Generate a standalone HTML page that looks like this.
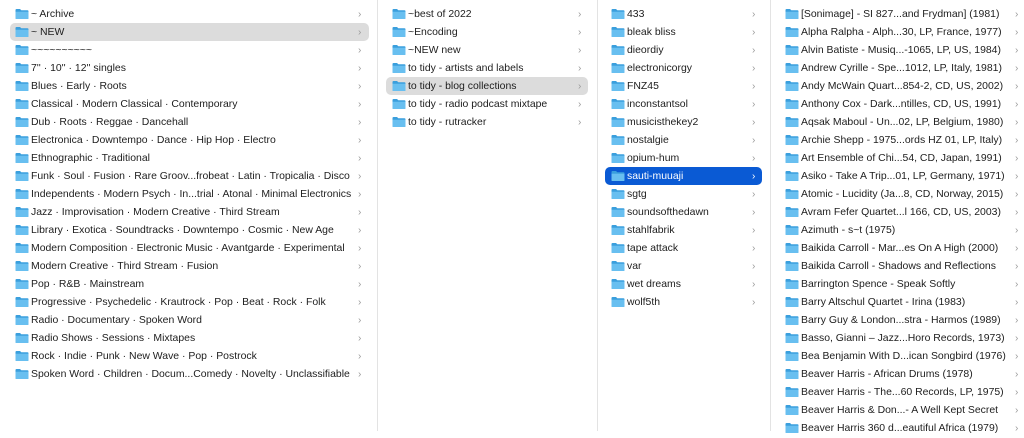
<!DOCTYPE html><html><head><style>
body{margin:0;width:1024px;height:431px;background:#fff;overflow:hidden;font-family:"Liberation Sans",sans-serif;font-size:10.45px;color:#1d1d1d;position:relative}
.col{position:absolute;top:0;height:431px;border-right:1px solid #e3e3e3}
.r{position:absolute;height:18px;line-height:19px;white-space:nowrap}
.r.s{background:#dcdcdc;border-radius:5px}
.r.b{background:#0a5ad4;color:#fff;border-radius:5px}
.f{position:absolute;top:4px;width:14px;height:11px}
</style></head><body>
<svg width="0" height="0" style="position:absolute"><defs><symbol id="fd" viewBox="0 0 14 11"><path d="M0.5 1.5Q0.5 0.5 1.5 0.5H5L6.3 1.8H12.5Q13.5 1.8 13.5 2.8V9.8Q13.5 10.5 12.8 10.5H1.2Q0.5 10.5 0.5 9.8Z" fill="#3a9fdd"/><path d="M0.5 3.2H13.5V9.8Q13.5 10.5 12.8 10.5H1.2Q0.5 10.5 0.5 9.8Z" fill="#68bff0"/></symbol></defs></svg>
<div id="root"></div>
<script>
const cols=[
{x:0,w:377,ix:15,tx:31,cx:358,sx:10,sw:359,items:["~ Archive","~ NEW","~~~~~~~~~~","7'' · 10'' · 12'' singles","Blues · Early · Roots","Classical · Modern Classical · Contemporary","Dub · Roots · Reggae · Dancehall","Electronica · Downtempo · Dance · Hip Hop · Electro","Ethnographic · Traditional","Funk · Soul · Fusion · Rare Groov...frobeat · Latin · Tropicalia · Disco","Independents · Modern Psych · In...trial · Atonal · Minimal Electronics","Jazz · Improvisation · Modern Creative · Third Stream","Library · Exotica · Soundtracks · Downtempo · Cosmic · New Age","Modern Composition · Electronic Music · Avantgarde · Experimental","Modern Creative · Third Stream · Fusion","Pop · R&B · Mainstream","Progressive · Psychedelic · Krautrock · Pop · Beat · Rock · Folk","Radio · Documentary · Spoken Word","Radio Shows · Sessions · Mixtapes","Rock · Indie · Punk · New Wave · Pop · Postrock","Spoken Word · Children · Docum...Comedy · Novelty · Unclassifiable"],sel:1,st:"s"},
{x:378,w:219,ix:392,tx:408,cx:578,sx:386,sw:202,items:["~best of 2022","~Encoding","~NEW new","to tidy - artists and labels","to tidy - blog collections","to tidy - radio podcast mixtape","to tidy - rutracker"],sel:4,st:"s"},
{x:598,w:172,ix:611,tx:627,cx:752,sx:605,sw:157,items:["433","bleak bliss","dieordiy","electronicorgy","FNZ45","inconstantsol","musicisthekey2","nostalgie","opium-hum","sauti-muuaji","sgtg","soundsofthedawn","stahlfabrik","tape attack","var","wet dreams","wolf5th"],sel:9,st:"b"},
{x:771,w:253,ix:785,tx:801,cx:1015,sx:0,sw:0,items:["[Sonimage] - SI 827...and Frydman] (1981)","Alpha Ralpha - Alph...30, LP, France, 1977)","Alvin Batiste - Musiq...-1065, LP, US, 1984)","Andrew Cyrille - Spe...1012, LP, Italy, 1981)","Andy McWain Quart...854-2, CD, US, 2002)","Anthony Cox - Dark...ntilles, CD, US, 1991)","Aqsak Maboul - Un...02, LP, Belgium, 1980)","Archie Shepp - 1975...ords HZ 01, LP, Italy)","Art Ensemble of Chi...54, CD, Japan, 1991)","Asiko - Take A Trip...01, LP, Germany, 1971)","Atomic - Lucidity (Ja...8, CD, Norway, 2015)","Avram Fefer Quartet...l 166, CD, US, 2003)","Azimuth -  s~t (1975)","Baikida Carroll - Mar...es On A High (2000)","Baikida Carroll - Shadows and Reflections","Barrington Spence - Speak Softly","Barry Altschul Quartet - Irina (1983)","Barry Guy & London...stra - Harmos (1989)","Basso, Gianni – Jazz...Horo Records, 1973)","Bea Benjamin With D...ican Songbird (1976)","Beaver Harris - African Drums (1978)","Beaver Harris - The...60 Records, LP, 1975)","Beaver Harris & Don...- A Well Kept Secret","Beaver Harris 360 d...eautiful Africa (1979)"],sel:-1}
];
let h="";
const esc=s=>s.replace(/&/g,"&amp;").replace(/</g,"&lt;");
cols.forEach((c,ci)=>{
 h+=`<div class="col" style="left:${c.x}px;width:${c.w}px"></div>`;
 c.items.forEach((it,i)=>{
  const y=5+i*18;
  const cls=i===c.sel?("r "+c.st):"r";
  if(i===c.sel)h+=`<div class="${cls}" style="top:${y}px;left:${c.sx}px;width:${c.sw}px"></div>`;
  h+=`<svg class="f" style="position:absolute;top:${y+3}px;left:${c.ix}px;width:14px;height:12px" viewBox="0 0 14 11"><use href="#fd"/></svg>`;
  h+=`<div class="r" style="top:${y}px;left:${c.tx}px;${i===c.sel&&c.st==='b'?'color:#fff':''}">${esc(it)}</div>`;
  h+=`<div class="r" style="top:${y}px;left:${c.cx}px;font-size:10px;color:${i===c.sel&&c.st==='b'?'#fff':'#9a9a9a'}">›</div>`;
 });
});
document.getElementById("root").innerHTML=h;
</script>
</body></html>
